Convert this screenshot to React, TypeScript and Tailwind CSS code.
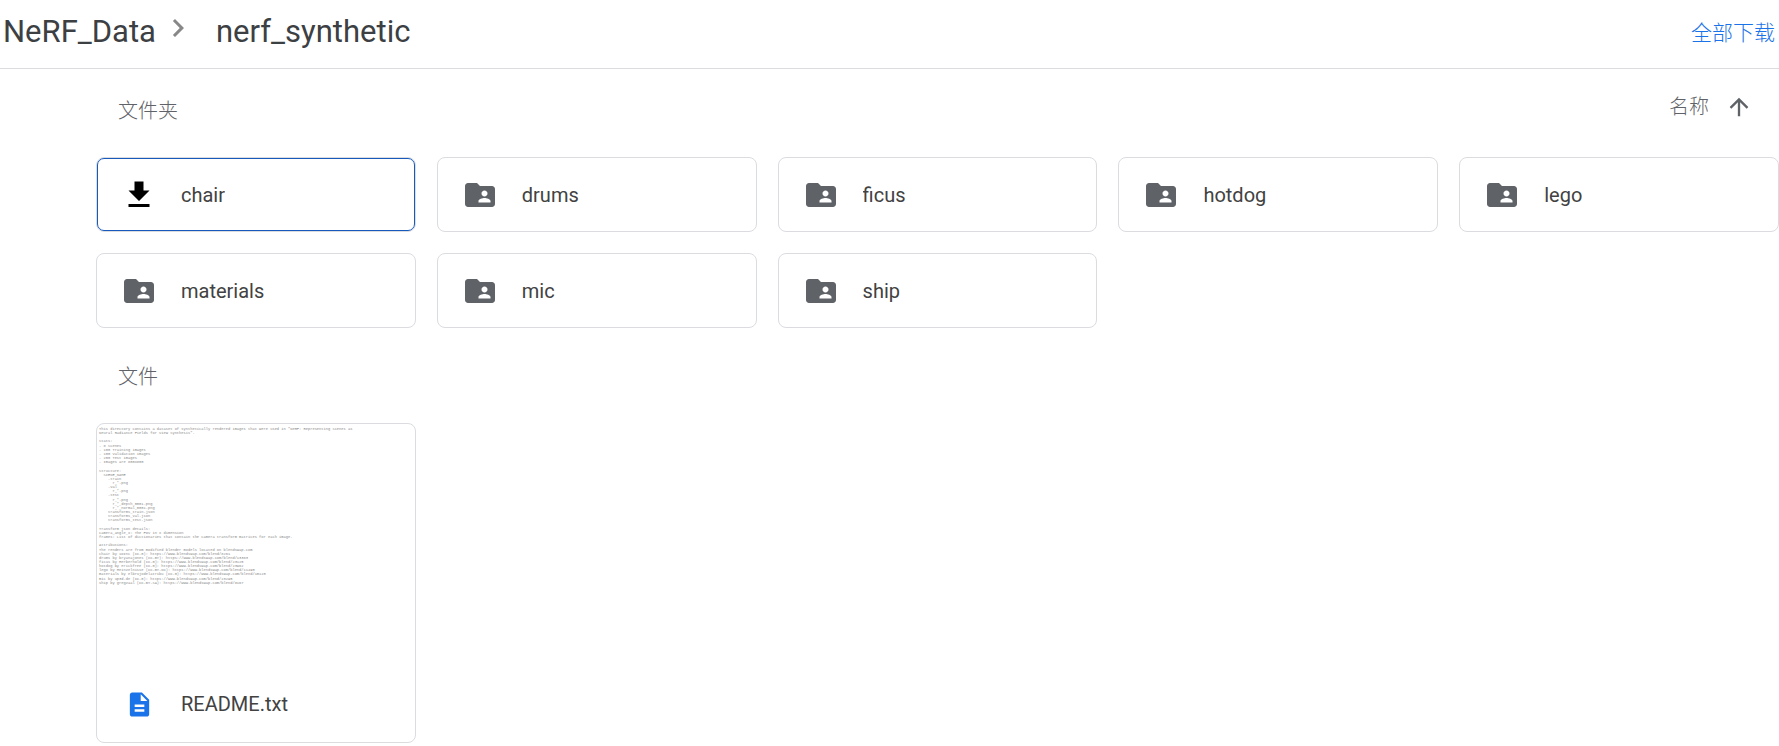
import { useState } from 'react';
import {
  MdArrowDownward,
  MdArrowUpward,
  MdChevronRight,
  MdDescription,
  MdFileDownload,
  MdFolderShared,
} from 'react-icons/md';

const folders = ['chair', 'drums', 'ficus', 'hotdog', 'lego', 'materials', 'mic', 'ship'];

const readme = `This directory contains a dataset of synthetically rendered images that were used in "NeRF: Representing Scenes as
Neural Radiance Fields for View Synthesis".

Stats:
- 8 Scenes
- 100 Training images
- 100 Validation images
- 200 Test images
- Images are 800x800

Structure:
  SCENE_NAME
    -train
      r_*.png
    -val
      r_*.png
    -test
      r_*.png
      r_*_depth_0001.png
      r_*_normal_0001.png
    transforms_train.json
    transforms_val.json
    transforms_test.json

Transform json details:
camera_angle_x: The FOV in x dimension
frames: List of dictionaries that contain the camera transform matrices for each image.

Attributions:
The renders are from modified blender models located on blendswap.com
chair by 1DInc (CC-0): https://www.blendswap.com/blend/8261
drums by bryanajones (CC-BY): https://www.blendswap.com/blend/13383
ficus by Herberhold (CC-0): https://www.blendswap.com/blend/23125
hotdog by erickfree (CC-0): https://www.blendswap.com/blend/23962
lego by Heinzelnisse (CC-BY-NC): https://www.blendswap.com/blend/11490
materials by elbrujodelatribu (CC-0): https://www.blendswap.com/blend/10120
mic by up3d.de (CC-0): https://www.blendswap.com/blend/23295
ship by gregzaal (CC-BY-SA): https://www.blendswap.com/blend/8167`;

interface FolderCardProps {
  name: string;
  active: boolean;
  onSelect: () => void;
}

function FolderCard({ name, active, onSelect }: FolderCardProps) {
  return (
    <button
      type="button"
      onClick={onSelect}
      className={`flex h-[75px] items-center gap-6 rounded-lg border border-[#dadce0] px-6 text-left ${
        active ? 'outline outline-1 -outline-offset-2 outline-[#185abc]' : ''
      }`}
    >
      {active ? (
        <MdFileDownload className="size-9 shrink-0 text-black" />
      ) : (
        <MdFolderShared className="size-9 shrink-0 text-[#5f6368]" />
      )}
      <span className="truncate">{name}</span>
    </button>
  );
}

function TextThumbnail({ text }: { text: string }) {
  return (
    <svg viewBox="0 0 2140 1634" className="block w-full" role="img" aria-label="README.txt">
      <g fill="#8a8a8a" fontSize="25" className="font-['Liberation_Mono',monospace]">
        {text.split('\n').map((line, i) => (
          <text key={i} x="14" y={40 + i * 28} xmlSpace="preserve">
            {line}
          </text>
        ))}
      </g>
    </svg>
  );
}

export default function App() {
  const [selected, setSelected] = useState('chair');
  const [ascending, setAscending] = useState(true);
  const sorted = ascending ? folders : [...folders].reverse();

  return (
    <div className="min-h-screen bg-white font-[Roboto,'Noto_Sans_CJK_SC',sans-serif] text-xl text-[#424242]">
      <header className="flex h-[69px] items-center justify-between border-b border-[#dadce0] pr-1 pl-[3px]">
        <nav className="flex items-center pb-1 text-[31px] text-[#3c4043]">
          <a href="#nerf-data">NeRF_Data</a>
          <MdChevronRight className="mr-5 mb-2 ml-1 size-9 text-[#888888]" />
          <a href="#nerf-synthetic">nerf_synthetic</a>
        </nav>
        <button type="button" className="text-[21px] font-light text-[#1a73e8]">
          全部下载
        </button>
      </header>

      <main className="pl-24">
        <section>
          <div className="flex h-[88px] items-center justify-between pr-[26px] pb-1 pl-[22px] font-light text-[#5f6368]">
            <h2>文件夹</h2>
            <button
              type="button"
              onClick={() => setAscending(!ascending)}
              className="flex items-center gap-4 pb-2"
            >
              名称
              {ascending ? <MdArrowUpward className="size-7" /> : <MdArrowDownward className="size-7" />}
            </button>
          </div>
          <div className="grid grid-cols-5 gap-[21px]">
            {sorted.map((name) => (
              <FolderCard
                key={name}
                name={name}
                active={name === selected}
                onSelect={() => setSelected(name)}
              />
            ))}
          </div>
        </section>

        <section>
          <div className="flex h-[95px] items-center pt-[2px] pl-[22px] font-light text-[#5f6368]">
            <h2>文件</h2>
          </div>
          <div className="grid grid-cols-5 gap-[21px]">
            <button type="button" className="overflow-hidden rounded-lg border border-[#dadce0] text-left">
              <TextThumbnail text={readme} />
              <div className="flex h-[75px] items-center gap-6 px-6">
                <span className="flex w-9 shrink-0 justify-center">
                  <MdDescription className="size-[29px] text-[#1a73e8]" />
                </span>
                <span className="truncate">README.txt</span>
              </div>
            </button>
          </div>
        </section>
      </main>
    </div>
  );
}
